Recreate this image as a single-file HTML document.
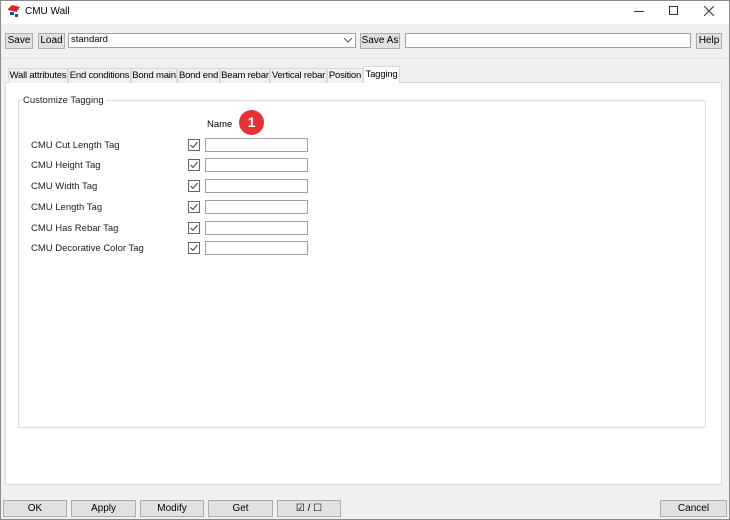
<!DOCTYPE html>
<html><head><meta charset="utf-8"><style>
*{box-sizing:border-box;margin:0;padding:0}
body{width:730px;height:520px;overflow:hidden;background:#f0f0f0;font-family:"Liberation Sans",Arial,sans-serif;font-size:9px;color:#000;position:relative}
.a{position:absolute}
.win{left:0;top:0;width:730px;height:520px;border:1px solid #8a8a8a}
.title{left:1px;top:1px;width:728px;height:23px;background:#fff}
.btn{position:absolute;background:#e1e1e1;border:1px solid #adadad;text-align:center;font-size:10px}
.inp{position:absolute;background:#fff;border:1px solid #a0a0a0}
.tab{position:absolute;top:68px;height:15px;background:#f0f0f0;border:1px solid #d9d9d9;border-bottom:none;line-height:13px;text-align:center;font-size:9.5px;color:#000;white-space:nowrap;overflow:hidden;letter-spacing:-0.2px}
.lbl{position:absolute;left:31px;font-size:9.5px;color:#222}
.cb{position:absolute;left:188px;width:12px;height:12px;border:1px solid #666;background:#fff}
.tb{position:absolute;left:205px;width:103px;height:14px;border:1px solid #a0a0a0;background:#fff}
</style></head><body>
<div class="a win"></div>
<div class="a title"></div>
<svg class="a" style="left:7px;top:5px" width="14" height="14" viewBox="0 0 14 14"><path d="M1 4 L5 0 L13 2 L10 6 Z" fill="#e0232b"/><path d="M1 4 L10 6 L10 7 L1 5Z" fill="#b0151b"/><path d="M3 7 h4 v3 h-4z M8 9 h3 v3 h-3z" fill="#1c4fa0"/></svg>
<div class="a" style="left:25px;top:6px;font-size:10px">CMU Wall</div>
<div class="a" style="left:634px;top:11px;width:10px;height:1px;background:#333"></div>
<div class="a" style="left:669px;top:6px;width:9px;height:9px;border:1px solid #333"></div>
<svg class="a" style="left:704px;top:6px" width="10" height="10"><path d="M0 0L10 10M10 0L0 10" stroke="#333" stroke-width="1"/></svg>

<div class="btn" style="left:5px;top:33px;width:28px;height:16px;line-height:14px">Save</div>
<div class="btn" style="left:38px;top:33px;width:27px;height:16px;line-height:14px">Load</div>
<div class="inp" style="left:68px;top:33px;width:288px;height:15px;line-height:12px;padding-left:2px;font-size:9.5px">standard</div>
<svg class="a" style="left:344px;top:38px" width="8" height="5"><path d="M0 0L4 4L8 0" stroke="#555" fill="none"/></svg>
<div class="btn" style="left:360px;top:33px;width:40px;height:16px;line-height:14px">Save As</div>
<div class="inp" style="left:405px;top:33px;width:286px;height:15px"></div>
<div class="btn" style="left:696px;top:33px;width:26px;height:16px;line-height:14px">Help</div>
<div class="a" style="left:1px;top:58px;width:728px;height:1px;background:#e3e3e3"></div>

<div class="a" style="left:5px;top:82px;width:717px;height:403px;background:#fff;border:1px solid #d9d9d9"></div>
<div class="tab" style="left:8px;width:60px">Wall attributes</div>
<div class="tab" style="left:68px;width:63px">End conditions</div>
<div class="tab" style="left:131px;width:46px">Bond main</div>
<div class="tab" style="left:177px;width:43px">Bond end</div>
<div class="tab" style="left:220px;width:50px">Beam rebar</div>
<div class="tab" style="left:270px;width:57px">Vertical rebar</div>
<div class="tab" style="left:327px;width:36px">Position</div>
<div class="tab" style="left:363px;top:66px;height:17px;width:37px;background:#fff;line-height:15px">Tagging</div>

<div class="a" style="left:18px;top:100px;width:688px;height:328px;border:1px solid #dcdcdc"></div>
<div class="a" style="left:21px;top:95px;background:#fff;padding:0 2px;font-size:9.5px;color:#222">Customize Tagging</div>
<div class="a" style="left:207px;top:119px;font-size:9.5px">Name</div>
<div class="a" style="left:239px;top:110px;width:25px;height:25px;border-radius:50%;background:#e53238;color:#fff;font-weight:bold;font-size:14px;text-align:center;line-height:25px">1</div>

<div class="lbl" style="top:140px">CMU Cut Length Tag</div>
<div class="lbl" style="top:160px">CMU Height Tag</div>
<div class="lbl" style="top:181px">CMU Width Tag</div>
<div class="lbl" style="top:202px">CMU Length Tag</div>
<div class="lbl" style="top:223px">CMU Has Rebar Tag</div>
<div class="lbl" style="top:243px">CMU Decorative Color Tag</div>

<div id="rows"></div>
<script>
var ys=[139,159,180,201,222,242],h='';
ys.forEach(function(y){h+='<div class="cb" style="top:'+y+'px"><svg width="10" height="10" style="position:absolute;left:0;top:0"><path d="M1.5 5L4 7.5L8.5 2" stroke="#444" fill="none" stroke-width="1"/></svg></div><div class="tb" style="top:'+(y-1)+'px"></div>';});
document.getElementById('rows').innerHTML=h;
</script>

<div class="btn" style="left:3px;top:500px;width:64px;height:17px;line-height:15px">OK</div>
<div class="btn" style="left:71px;top:500px;width:65px;height:17px;line-height:15px">Apply</div>
<div class="btn" style="left:140px;top:500px;width:64px;height:17px;line-height:15px">Modify</div>
<div class="btn" style="left:208px;top:500px;width:65px;height:17px;line-height:15px">Get</div>
<div class="btn" style="left:277px;top:500px;width:64px;height:17px;line-height:15px">☑ / ☐</div>
<div class="btn" style="left:660px;top:500px;width:67px;height:17px;line-height:15px">Cancel</div>
</body></html>
